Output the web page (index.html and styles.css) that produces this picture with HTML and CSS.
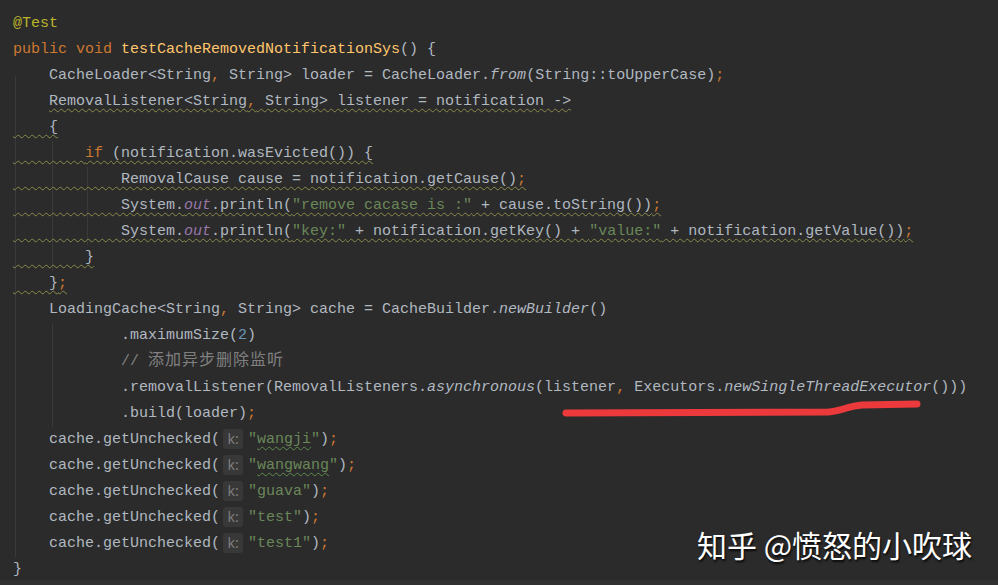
FILE: index.html
```html
<!DOCTYPE html>
<html lang="en">
<head>
  <meta charset="UTF-8">
  <meta name="viewport" content="width=device-width, initial-scale=1.0">
  <title>testCacheRemovedNotificationSys</title>
  <link rel="stylesheet" href="styles.css">
</head>
<body>
  <div class="editor">
    <div class="code">
      <div class="line"><span class="ann">@Test</span></div>
      <div class="line"><span class="kw">public void </span><span class="fn">testCacheRemovedNotificationSys</span>() {</div>
      <div class="line g1">    CacheLoader&lt;String<span class="pn">,</span> String&gt; loader = CacheLoader.<span class="st">from</span>(String::toUpperCase)<span class="pn">;</span></div>
      <div class="line g1">    <span class="warn">RemovalListener&lt;String<span class="pn">,</span> String&gt; listener = notification -&gt;</span></div>
      <div class="line g1"><span class="warn">    {</span></div>
      <div class="line g2"><span class="warn">        <span class="kw">if </span>(notification.wasEvicted()) {</span></div>
      <div class="line g3"><span class="warn">            RemovalCause cause = notification.getCause()<span class="pn">;</span></span></div>
      <div class="line g3"><span class="warn">            System.<span class="fld">out</span>.println(<span class="str">"remove cacase is :"</span> + cause.toString())<span class="pn">;</span></span></div>
      <div class="line g3"><span class="warn">            System.<span class="fld">out</span>.println(<span class="str">"key:"</span> + notification.getKey() + <span class="str">"value:"</span> + notification.getValue())<span class="pn">;</span></span></div>
      <div class="line g2"><span class="warn">        }</span></div>
      <div class="line g1"><span class="warn">    }<span class="pn">;</span></span></div>
      <div class="line g1">    LoadingCache&lt;String<span class="pn">,</span> String&gt; cache = CacheBuilder.<span class="st">newBuilder</span>()</div>
      <div class="line g2">            .maximumSize(<span class="num">2</span>)</div>
      <div class="line g2">            <span class="cm">// <span class="cjk">添加异步删除监听</span></span></div>
      <div class="line g2">            .removalListener(RemovalListeners.<span class="st">asynchronous</span>(listener<span class="pn">,</span> Executors.<span class="st">newSingleThreadExecutor</span>()))</div>
      <div class="line g2">            .build(loader)<span class="pn">;</span></div>
      <div class="line g1">    cache.getUnchecked(<span class="hint">k:</span><span class="str">"<span class="typo">wangji</span>"</span>)<span class="pn">;</span></div>
      <div class="line g1">    cache.getUnchecked(<span class="hint">k:</span><span class="str">"<span class="typo">wangwang</span>"</span>)<span class="pn">;</span></div>
      <div class="line g1">    cache.getUnchecked(<span class="hint">k:</span><span class="str">"guava"</span>)<span class="pn">;</span></div>
      <div class="line g1">    cache.getUnchecked(<span class="hint">k:</span><span class="str">"test"</span>)<span class="pn">;</span></div>
      <div class="line g1">    cache.getUnchecked(<span class="hint">k:</span><span class="str">"test1"</span>)<span class="pn">;</span></div>
      <div class="line">}</div>
    </div>
    <div class="status"></div>

    <svg class="scribble" width="998" height="585" viewBox="0 0 998 585">
      <path d="M566 413 L828 412 C842 411 848 406 862 405 L917 404" />
    </svg>
    <div class="watermark">知乎 @愤怒的小吹球</div>
  </div>
</body>
</html>
```

FILE: styles.css
```css
:root {
  --bg: #2b2b2b;
  --text: #b0b8c0;
  --keyword: #cc7832;
  --annotation: #bbb529;
  --method: #ffc66d;
  --string: #6a8759;
  --number: #6897bb;
  --comment: #808080;
  --field: #9876aa;
  --guide: #3a3a3a;
  --warn: #8a8a4c;
}

body {
  margin: 0;
  background-color: var(--bg);
}

.editor {
  position: relative;
  width: 998px;
  height: 585px;
  overflow: hidden;
}

.code {
  padding: 11px 0 0 13px;
  height: 569px;
  font-family: "Liberation Mono", "Noto Sans CJK SC", monospace;
  font-size: 15px;
  color: var(--text);
}

.line {
  height: 26px;
  line-height: 26px;
  white-space: pre;
  margin-left: -13px;
  padding-left: 13px;
}

/* indent guides */
.g1 {
  background-image: linear-gradient(var(--guide), var(--guide));
  background-size: 1px 100%;
  background-position: 15px 0;
  background-repeat: no-repeat;
}

.g2 {
  background-image: linear-gradient(var(--guide), var(--guide)), linear-gradient(var(--guide), var(--guide));
  background-size: 1px 100%, 1px 100%;
  background-position: 15px 0, 52px 0;
  background-repeat: no-repeat;
}

.g3 {
  background-image: linear-gradient(var(--guide), var(--guide)), linear-gradient(var(--guide), var(--guide)), linear-gradient(var(--guide), var(--guide));
  background-size: 1px 100%, 1px 100%, 1px 100%;
  background-position: 15px 0, 52px 0, 87px 0;
  background-repeat: no-repeat;
}

.line:first-child + .line + .line.g1 {
  background-position: 15px 13px;
}

.kw, .pn {
  color: var(--keyword);
}

.ann {
  color: var(--annotation);
}

.fn {
  color: var(--method);
}

.st {
  font-style: italic;
}

.fld {
  font-style: italic;
  color: var(--field);
}

.str {
  color: var(--string);
}

.num {
  color: var(--number);
}

.cm {
  color: var(--comment);
}

.cjk {
  font-family: "Noto Sans CJK SC", sans-serif;
  font-size: 16px;
  line-height: 1;
  letter-spacing: 1px;
}

.warn {
  text-decoration: underline wavy var(--warn);
  text-decoration-thickness: 1px;
  text-underline-offset: 3px;
  text-decoration-skip-ink: none;
}

.typo {
  text-decoration: underline wavy #5f8a4f;
  text-decoration-thickness: 1px;
  text-underline-offset: 3px;
  text-decoration-skip-ink: none;
}

.hint {
  display: inline-block;
  width: 20px;
  height: 20px;
  line-height: 20px;
  margin: 0 5px 0 3px;
  vertical-align: middle;
  text-align: center;
  background-color: #383838;
  border-radius: 3px;
  color: #7d7d7d;
  font-family: "Noto Sans", sans-serif;
  font-size: 14px;
}

.status {
  height: 5px;
  background-color: #313131;
}

.scribble {
  position: absolute;
  left: 0;
  top: 0;
  pointer-events: none;
}

.scribble path {
  fill: none;
  stroke: #ec3a3c;
  stroke-width: 7;
  stroke-linecap: round;
  stroke-linejoin: round;
}

.watermark {
  position: absolute;
  left: 697px;
  top: 522px;
  font-family: "Noto Sans CJK SC", sans-serif;
  font-size: 30px;
  color: #ffffff;
  text-shadow: 1px 2px 2px rgba(0, 0, 0, 0.8);
  white-space: nowrap;
}
```
